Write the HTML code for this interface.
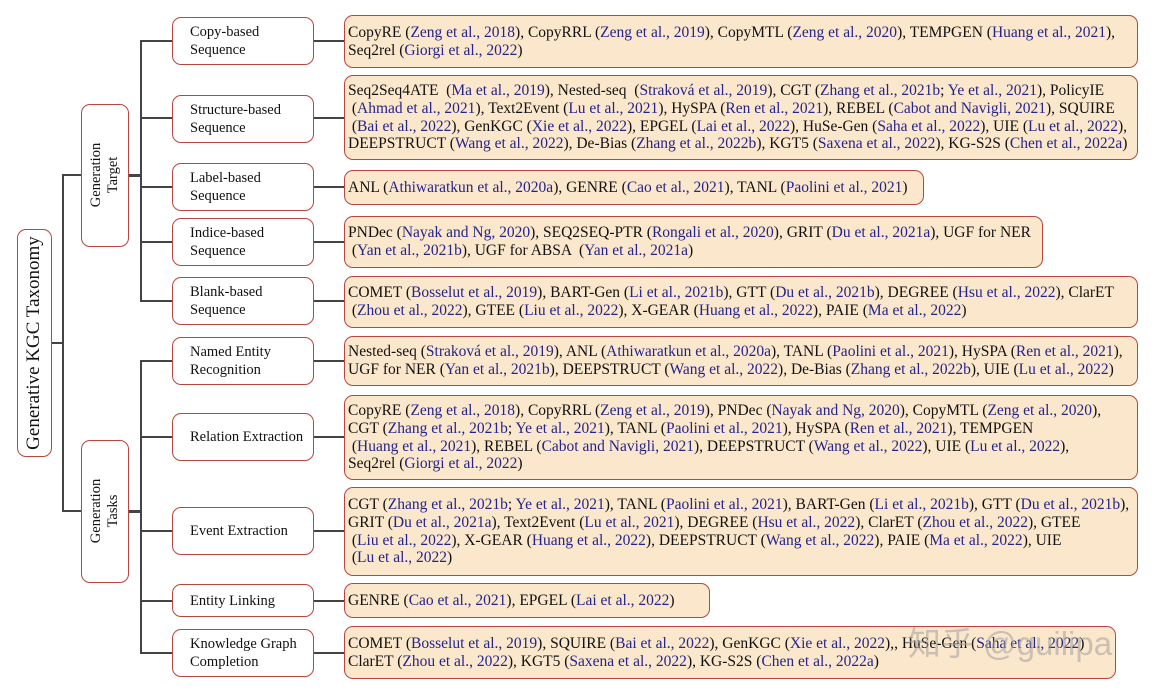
<!DOCTYPE html>
<html><head><meta charset="utf-8"><style>
body{margin:0;width:1163px;height:691px;background:#fff;position:relative;overflow:hidden;font-family:"Liberation Serif",serif;color:#111}
.b{position:absolute;box-sizing:border-box;border:1.3px solid #b8463e;border-radius:9px;background:#fff}
.l2{left:172px;width:142px;font-size:14.5px;line-height:18px;padding-left:17px;display:flex;align-items:center;white-space:nowrap}
.lf{position:absolute;box-sizing:border-box;left:344px;border:1.3px solid #b8463e;border-radius:9px;background:#fbe7cb;font-size:15.5px;line-height:17.6px;padding:0 3px;display:flex;align-items:center;white-space:nowrap}
i{font-style:normal;color:#24248a}
.ln{position:absolute;background:#444}
.rot{position:absolute;transform:rotate(-90deg);white-space:nowrap;text-align:center}
</style></head><body>
<div class="ln" style="left:51px;top:342px;width:12px;height:2px"></div>
<div class="ln" style="left:62px;top:175px;width:2px;height:337px"></div>
<div class="ln" style="left:62px;top:174px;width:19px;height:2px"></div>
<div class="ln" style="left:62px;top:510px;width:19px;height:2px"></div>
<div class="ln" style="left:128px;top:174px;width:13px;height:3px"></div>
<div class="ln" style="left:128px;top:510px;width:13px;height:3px"></div>
<div class="ln" style="left:140px;top:40px;width:2px;height:261px"></div>
<div class="ln" style="left:140px;top:360px;width:2px;height:293px"></div>
<div class="ln" style="left:140px;top:40px;width:32px;height:2px"></div>
<div class="ln" style="left:140px;top:117px;width:32px;height:2px"></div>
<div class="ln" style="left:140px;top:186px;width:32px;height:2px"></div>
<div class="ln" style="left:140px;top:241px;width:32px;height:2px"></div>
<div class="ln" style="left:140px;top:300px;width:32px;height:2px"></div>
<div class="ln" style="left:140px;top:360px;width:32px;height:2px"></div>
<div class="ln" style="left:140px;top:436px;width:32px;height:2px"></div>
<div class="ln" style="left:140px;top:530px;width:32px;height:2px"></div>
<div class="ln" style="left:140px;top:600px;width:32px;height:2px"></div>
<div class="ln" style="left:140px;top:652px;width:32px;height:2px"></div>
<div class="ln" style="left:314px;top:40px;width:30px;height:2px"></div>
<div class="ln" style="left:314px;top:117px;width:30px;height:2px"></div>
<div class="ln" style="left:314px;top:186px;width:30px;height:2px"></div>
<div class="ln" style="left:314px;top:241px;width:30px;height:2px"></div>
<div class="ln" style="left:314px;top:300px;width:30px;height:2px"></div>
<div class="ln" style="left:314px;top:360px;width:30px;height:2px"></div>
<div class="ln" style="left:314px;top:436px;width:30px;height:2px"></div>
<div class="ln" style="left:314px;top:530px;width:30px;height:2px"></div>
<div class="ln" style="left:314px;top:600px;width:30px;height:2px"></div>
<div class="ln" style="left:314px;top:652px;width:30px;height:2px"></div>

<div class="b" style="left:17px;top:229px;width:35px;height:228px"></div>
<div class="rot" style="left:-80px;top:332px;width:228px;font-size:19px;line-height:22px">Generative KGC Taxonomy</div>
<div class="b" style="left:81px;top:104px;width:48px;height:143px"></div>
<div class="rot" style="left:34px;top:158px;width:142px;font-size:14.5px;line-height:17px">Generation<br>Target</div>
<div class="b" style="left:81px;top:440px;width:48px;height:143px"></div>
<div class="rot" style="left:34px;top:494px;width:142px;font-size:14.5px;line-height:17px">Generation<br>Tasks</div>

<div class="b l2" style="top:17px;height:48px">Copy-based<br>Sequence</div>
<div class="b l2" style="top:95px;height:48px">Structure-based<br>Sequence</div>
<div class="b l2" style="top:163px;height:48px">Label-based<br>Sequence</div>
<div class="b l2" style="top:218px;height:48px">Indice-based<br>Sequence</div>
<div class="b l2" style="top:277px;height:48px">Blank-based<br>Sequence</div>
<div class="b l2" style="top:337px;height:48px">Named Entity<br>Recognition</div>
<div class="b l2" style="top:413px;height:48px">Relation Extraction</div>
<div class="b l2" style="top:507px;height:48px">Event Extraction</div>
<div class="b l2" style="top:584px;height:33px">Entity Linking</div>
<div class="b l2" style="top:629px;height:48px">Knowledge Graph<br>Completion</div>

<div class="lf" style="top:15px;width:794px;height:53px"><div>CopyRE (<i>Zeng et al., 2018</i>), CopyRRL (<i>Zeng et al., 2019</i>), CopyMTL (<i>Zeng et al., 2020</i>), TEMPGEN (<i>Huang et al., 2021</i>),<br>Seq2rel (<i>Giorgi et al., 2022</i>)</div></div>
<div class="lf" style="top:75px;width:794px;height:85px"><div>Seq2Seq4ATE &nbsp;(<i>Ma et al., 2019</i>), Nested-seq &nbsp;(<i>Straková et al., 2019</i>), CGT (<i>Zhang et al., 2021b</i>; <i>Ye et al., 2021</i>), PolicyIE<br>&nbsp;(<i>Ahmad et al., 2021</i>), Text2Event (<i>Lu et al., 2021</i>), HySPA (<i>Ren et al., 2021</i>), REBEL (<i>Cabot and Navigli, 2021</i>), SQUIRE<br>&nbsp;(<i>Bai et al., 2022</i>), GenKGC (<i>Xie et al., 2022</i>), EPGEL (<i>Lai et al., 2022</i>), HuSe-Gen (<i>Saha et al., 2022</i>), UIE (<i>Lu et al., 2022</i>),<br>DEEPSTRUCT (<i>Wang et al., 2022</i>), De-Bias (<i>Zhang et al., 2022b</i>), KGT5 (<i>Saxena et al., 2022</i>), KG-S2S (<i>Chen et al., 2022a</i>)</div></div>
<div class="lf" style="top:170px;width:580px;height:35px"><div>ANL (<i>Athiwaratkun et al., 2020a</i>), GENRE (<i>Cao et al., 2021</i>), TANL (<i>Paolini et al., 2021</i>)</div></div>
<div class="lf" style="top:216px;width:699px;height:52px"><div>PNDec (<i>Nayak and Ng, 2020</i>), SEQ2SEQ-PTR (<i>Rongali et al., 2020</i>), GRIT (<i>Du et al., 2021a</i>), UGF for NER<br>&nbsp;(<i>Yan et al., 2021b</i>), UGF for ABSA &nbsp;(<i>Yan et al., 2021a</i>)</div></div>
<div class="lf" style="top:276px;width:794px;height:52px"><div>COMET (<i>Bosselut et al., 2019</i>), BART-Gen (<i>Li et al., 2021b</i>), GTT (<i>Du et al., 2021b</i>), DEGREE (<i>Hsu et al., 2022</i>), ClarET<br>&nbsp;(<i>Zhou et al., 2022</i>), GTEE (<i>Liu et al., 2022</i>), X-GEAR (<i>Huang et al., 2022</i>), PAIE (<i>Ma et al., 2022</i>)</div></div>
<div class="lf" style="top:336px;width:794px;height:50px"><div>Nested-seq (<i>Straková et al., 2019</i>), ANL (<i>Athiwaratkun et al., 2020a</i>), TANL (<i>Paolini et al., 2021</i>), HySPA (<i>Ren et al., 2021</i>),<br>UGF for NER (<i>Yan et al., 2021b</i>), DEEPSTRUCT (<i>Wang et al., 2022</i>), De-Bias (<i>Zhang et al., 2022b</i>), UIE (<i>Lu et al., 2022</i>)</div></div>
<div class="lf" style="top:395px;width:794px;height:85px"><div>CopyRE (<i>Zeng et al., 2018</i>), CopyRRL (<i>Zeng et al., 2019</i>), PNDec (<i>Nayak and Ng, 2020</i>), CopyMTL (<i>Zeng et al., 2020</i>),<br>CGT (<i>Zhang et al., 2021b</i>; <i>Ye et al., 2021</i>), TANL (<i>Paolini et al., 2021</i>), HySPA (<i>Ren et al., 2021</i>), TEMPGEN<br>&nbsp;(<i>Huang et al., 2021</i>), REBEL (<i>Cabot and Navigli, 2021</i>), DEEPSTRUCT (<i>Wang et al., 2022</i>), UIE (<i>Lu et al., 2022</i>),<br>Seq2rel (<i>Giorgi et al., 2022</i>)</div></div>
<div class="lf" style="top:487px;width:794px;height:89px"><div>CGT (<i>Zhang et al., 2021b</i>; <i>Ye et al., 2021</i>), TANL (<i>Paolini et al., 2021</i>), BART-Gen (<i>Li et al., 2021b</i>), GTT (<i>Du et al., 2021b</i>),<br>GRIT (<i>Du et al., 2021a</i>), Text2Event (<i>Lu et al., 2021</i>), DEGREE (<i>Hsu et al., 2022</i>), ClarET (<i>Zhou et al., 2022</i>), GTEE<br>&nbsp;(<i>Liu et al., 2022</i>), X-GEAR (<i>Huang et al., 2022</i>), DEEPSTRUCT (<i>Wang et al., 2022</i>), PAIE (<i>Ma et al., 2022</i>), UIE<br>&nbsp;(<i>Lu et al., 2022</i>)</div></div>
<div class="lf" style="top:583px;width:366px;height:35px"><div>GENRE (<i>Cao et al., 2021</i>), EPGEL (<i>Lai et al., 2022</i>)</div></div>
<div class="lf" style="top:626px;width:772px;height:53px"><div>COMET (<i>Bosselut et al., 2019</i>), SQUIRE (<i>Bai et al., 2022</i>), GenKGC (<i>Xie et al., 2022</i>),, HuSe-Gen (<i>Saha et al., 2022</i>)<br>ClarET (<i>Zhou et al., 2022</i>), KGT5 (<i>Saxena et al., 2022</i>), KG-S2S (<i>Chen et al., 2022a</i>)</div></div>
<div style="position:absolute;left:908px;top:617px;font-family:'Liberation Sans','Noto Sans CJK SC',sans-serif;font-size:33px;color:rgba(160,160,160,0.55);white-space:nowrap">知乎 @guilipa</div>
</body></html>
